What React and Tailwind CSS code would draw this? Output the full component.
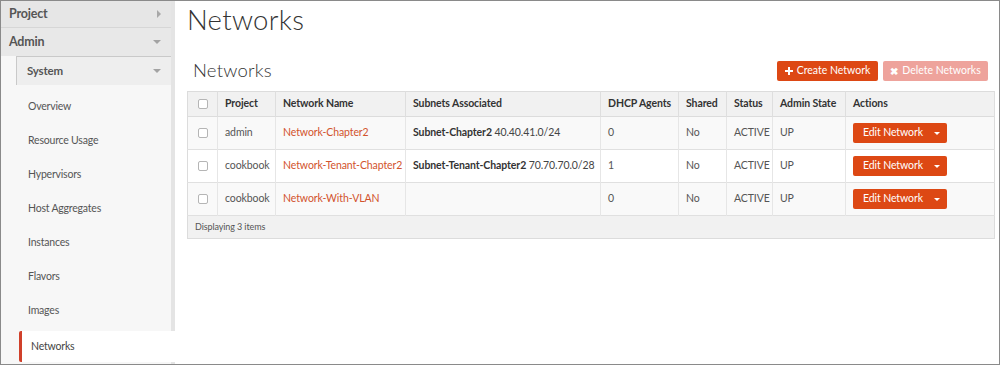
const font = { fontFamily: 'Lato, "Open Sans", sans-serif' }

const navItems = ['Overview', 'Resource Usage', 'Hypervisors', 'Host Aggregates', 'Instances', 'Flavors', 'Images']

const rows = [
    { project: 'admin', name: 'Network-Chapter2', subnet: 'Subnet-Chapter2', cidr: '40.40.41.0/24', dhcp: '0' },
    { project: 'cookbook', name: 'Network-Tenant-Chapter2', subnet: 'Subnet-Tenant-Chapter2', cidr: '70.70.70.0/28', dhcp: '1' },
    { project: 'cookbook', name: 'Network-With-VLAN', subnet: '', cidr: '', dhcp: '0' },
]

const Caret = () => (
    <span className="inline-block w-0 h-0 border-l-[4px] border-r-[4px] border-t-[4px] border-l-transparent border-r-transparent border-t-[#a3a3a3]" />
)

const Checkbox = () => (
    <span className="block w-[10px] h-[10px] mx-auto rounded-[2px] border border-[#b5b5b5] bg-white" />
)

const Sidebar = () => {
    return (
        <div className="w-[174px] shrink-0 h-full bg-[#f7f7f7] border-r-4 border-[#e4e4e4] flex flex-col tracking-[-0.2px]">
            <div className="h-[27px] shrink-0 flex items-center justify-between pl-[8px] pr-[10px] bg-[#e6e6e6] border-b border-[#d6d6d6]">
                <span className="text-[12.5px] font-bold text-[#555]">Project</span>
                <span className="w-0 h-0 border-t-[4px] border-b-[4px] border-l-[4px] border-t-transparent border-b-transparent border-l-[#a8a8a8]" />
            </div>
            <div className="h-[28px] shrink-0 flex items-center justify-between pl-[8px] pr-[10px] bg-[#e8e8e8]">
                <span className="text-[12.5px] font-bold text-[#555]">Admin</span>
                <Caret />
            </div>
            <div className="h-[29px] shrink-0 ml-[15px] flex items-center justify-between pl-[10px] pr-[10px] bg-[#eeeeee] border-l border-t border-[#c9c9c9]">
                <span className="text-[11.5px] font-bold text-[#555]">System</span>
                <Caret />
            </div>
            <div className="h-[5px] shrink-0" />
            {navItems.map((item) => (
                <div key={item} className="h-[34px] shrink-0 flex items-center pl-[27px] text-[10.5px] text-[#555]">
                    {item}
                </div>
            ))}
            <div className="h-[3px] shrink-0" />
            <div className="h-[31px] shrink-0 ml-[18px] -mr-[4px] flex items-center pl-[9px] bg-white border-l-[3px] border-[#d0402a] rounded-l-[2px] text-[10.5px] text-[#444]">
                Networks
            </div>
        </div>
    )
}

const NetworksTable = () => {
    const th = 'px-[7px] text-left font-bold text-[#333] border-r border-[#dedede] whitespace-nowrap'
    const td = 'px-[7px] border-r border-[#e6e6e6] whitespace-nowrap'
    return (
        <table className="w-[808px] border-collapse border border-[#dcdcdc] text-[10.5px] tracking-[-0.1px] text-[#333] table-fixed">
            <colgroup>
                <col className="w-[30px]" />
                <col className="w-[58px]" />
                <col className="w-[130px]" />
                <col className="w-[195px]" />
                <col className="w-[78px]" />
                <col className="w-[48px]" />
                <col className="w-[46px]" />
                <col className="w-[73px]" />
                <col />
            </colgroup>
            <thead>
                <tr className="h-[25px] bg-[#f1f1f1] border-b border-[#dcdcdc]">
                    <th className={th}><Checkbox /></th>
                    <th className={th}>Project</th>
                    <th className={th}>Network Name</th>
                    <th className={th}>Subnets Associated</th>
                    <th className={th}>DHCP Agents</th>
                    <th className={th}>Shared</th>
                    <th className={th}>Status</th>
                    <th className={th}>Admin State</th>
                    <th className={th}>Actions</th>
                </tr>
            </thead>
            <tbody>
                {rows.map((r, i) => (
                    <tr key={r.name} className={`h-[33px] border-b border-[#e0e0e0] ${i % 2 === 0 ? 'bg-[#f9f9f9]' : 'bg-white'}`}>
                        <td className={td}><Checkbox /></td>
                        <td className={`${td} text-[#555]`}>{r.project}</td>
                        <td className={`${td} text-[#d2532d]`}>{r.name}</td>
                        <td className={td}>
                            {r.subnet && (
                                <>
                                    <span className="font-bold">{r.subnet}</span> <span className="text-[#444]">{r.cidr}</span>
                                </>
                            )}
                        </td>
                        <td className={`${td} text-[#555]`}>{r.dhcp}</td>
                        <td className={`${td} text-[#555]`}>No</td>
                        <td className={`${td} text-[#555]`}>ACTIVE</td>
                        <td className={`${td} text-[#555]`}>UP</td>
                        <td className="px-[7px]">
                            <div className="w-[94px] h-[20px] flex items-center rounded-[2px] bg-[#dd4814] text-white text-[10.5px] whitespace-nowrap">
                                <span className="pl-[10px] flex-1">Edit Network</span>
                                <span className="w-[20px] flex justify-center">
                                    <span className="w-0 h-0 border-l-[3px] border-r-[3px] border-t-[3px] border-l-transparent border-r-transparent border-t-white" />
                                </span>
                            </div>
                        </td>
                    </tr>
                ))}
                <tr className="h-[23px] bg-[#f1f1f1]">
                    <td colSpan={9} className="px-[7px] text-[9px] text-[#555]">Displaying 3 items</td>
                </tr>
            </tbody>
        </table>
    )
}

export default function App() {
    return (
        <div style={font} className="w-[1000px] h-[365px] border border-[#8a8a8a] flex overflow-hidden bg-white">
            <Sidebar />
            <div className="flex-1 flex flex-col pl-[12px]">
                <h1 className="h-[37px] shrink-0 flex items-center text-[27.5px] font-light text-[#333] tracking-[0.3px]">Networks</h1>
                <div className="h-[53px] shrink-0 flex items-center justify-between pt-[13px] pr-[11px] pl-[6px]">
                    <h2 className="text-[18.5px] font-light text-[#333] tracking-[0.2px]">Networks</h2>
                    <div className="flex gap-[5px]">
                        <button className="h-[20px] w-[101px] flex items-center justify-center gap-[4px] rounded-[2px] bg-[#dd4814] text-white text-[10.5px] whitespace-nowrap">
                            <span className="relative w-[8px] h-[8px]">
                                <span className="absolute left-[3px] top-0 w-[2px] h-[8px] bg-white" />
                                <span className="absolute left-0 top-[3px] w-[8px] h-[2px] bg-white" />
                            </span>
                            Create Network
                        </button>
                        <button className="h-[20px] w-[105px] flex items-center justify-center gap-[4px] rounded-[2px] bg-[#eea39c] text-white text-[10.5px] whitespace-nowrap">
                            <span className="font-bold text-[10px] leading-none">✖</span> Delete Networks
                        </button>
                    </div>
                </div>
                <div>
                    <NetworksTable />
                </div>
            </div>
        </div>
    )
}
